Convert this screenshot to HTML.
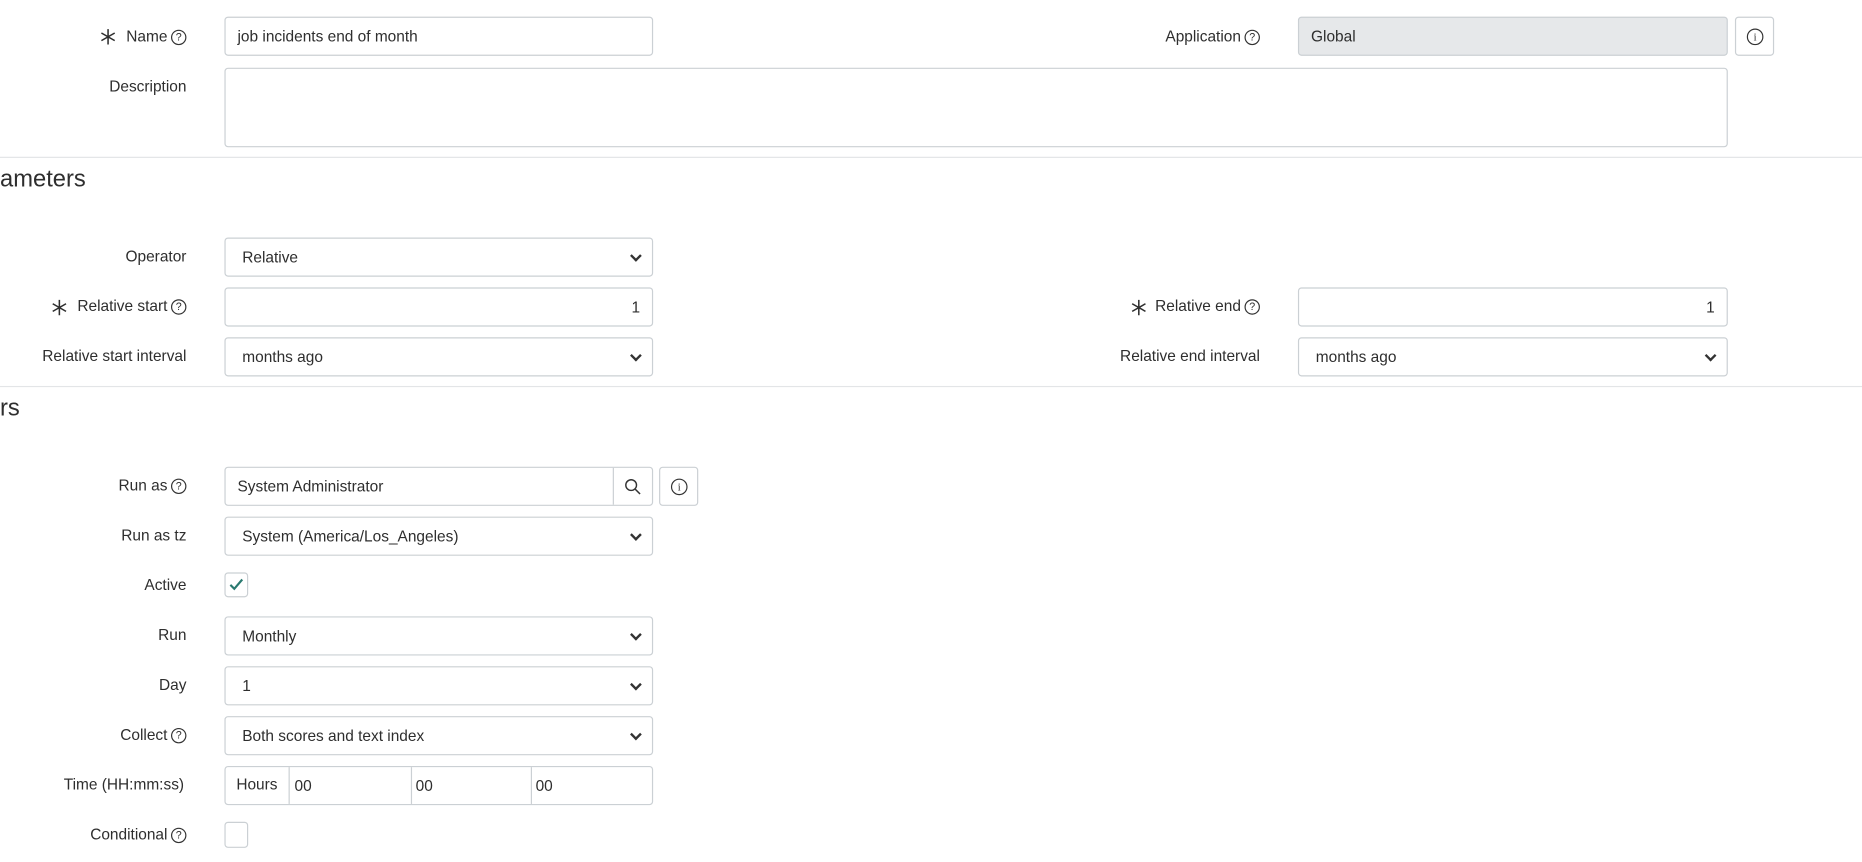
<!DOCTYPE html>
<html><head><meta charset="utf-8"><style>
html,body{margin:0;padding:0;background:#fff;overflow:hidden}
#w{position:absolute;left:0;top:0;width:1568px;height:726px;transform:scale(1.1875);transform-origin:0 0;font-family:"Liberation Sans",sans-serif;color:#2e2e2e;font-size:13px}
.a{position:absolute;box-sizing:border-box}
.in{border:1px solid #cbd0d4;border-radius:3px;background:#fff;height:33px;line-height:31px;padding-left:10px}
.sel{padding-left:14px}
.sel:after{content:"";position:absolute;right:10px;top:11px;width:5px;height:5px;border-right:2px solid #333;border-bottom:2px solid #333;transform:rotate(45deg)}
.lbl{text-align:right;width:200px;height:20px;line-height:20px}
.q{display:inline-block;width:11px;height:11px;border:1px solid #333;border-radius:50%;font-size:9px;line-height:11px;text-align:center;margin-left:3px;vertical-align:1px}
.hr{position:absolute;left:0;width:1568px;height:1px;background:#e3e5e7}
.h{position:absolute;left:0;font-size:20px;color:#2e2e2e}
.ib{border:1px solid #cbd0d4;border-radius:3px;width:33px;height:33px}
.ii{position:absolute;left:9px;top:9px;width:12px;height:12px;border:1px solid #333;border-radius:50%;font-size:9px;line-height:12px;text-align:center;font-family:"Liberation Serif",serif}
</style></head><body><div id="w">
<svg width="0" height="0" style="position:absolute"><defs><g id="ast"><path d="M7 0.5V13.5M1.4 3.8L12.6 10.2M1.4 10.2L12.6 3.8" stroke="#2e2e2e" stroke-width="1.3" fill="none"/></g></defs></svg>

<div class="a lbl" style="left:-43px;top:21px">Name<span class="q">?</span></div>
<svg class="a" style="left:84px;top:24px" width="14" height="14"><use href="#ast"/></svg>
<div class="a in" style="left:189px;top:14px;width:361px">job incidents end of month</div>
<div class="a lbl" style="left:861px;top:21px">Application<span class="q">?</span></div>
<div class="a in" style="left:1093px;top:14px;width:362px;background:#e6e8ea">Global</div>
<div class="a ib" style="left:1461px;top:14px"><div class="ii">i</div></div>

<div class="a lbl" style="left:-43px;top:63px">Description</div>
<div class="a in" style="left:189px;top:57px;width:1266px;height:67px"></div>

<div class="hr" style="top:132px"></div>
<div class="h" style="top:140px">ameters</div>

<div class="a lbl" style="left:-43px;top:206px">Operator</div>
<div class="a in sel" style="left:189px;top:200px;width:361px">Relative</div>

<div class="a lbl" style="left:-43px;top:248px">Relative start<span class="q">?</span></div>
<svg class="a" style="left:43px;top:252px" width="14" height="14"><use href="#ast"/></svg>
<div class="a in" style="left:189px;top:242px;width:361px;text-align:right;padding-right:10px">1</div>
<div class="a lbl" style="left:861px;top:248px">Relative end<span class="q">?</span></div>
<svg class="a" style="left:952px;top:252px" width="14" height="14"><use href="#ast"/></svg>
<div class="a in" style="left:1093px;top:242px;width:362px;text-align:right;padding-right:10px">1</div>

<div class="a lbl" style="left:-43px;top:290px">Relative start interval</div>
<div class="a in sel" style="left:189px;top:284px;width:361px">months ago</div>
<div class="a lbl" style="left:861px;top:290px">Relative end interval</div>
<div class="a in sel" style="left:1093px;top:284px;width:362px">months ago</div>

<div class="hr" style="top:325px"></div>
<div class="h" style="top:333px">rs</div>

<div class="a lbl" style="left:-43px;top:399px">Run as<span class="q">?</span></div>
<div class="a in" style="left:189px;top:393px;width:361px">System Administrator</div>
<div class="a" style="left:516px;top:394px;width:1px;height:31px;background:#cbd0d4"></div>
<svg class="a" style="left:525px;top:402px" width="16" height="16" viewBox="0 0 16 16"><circle cx="6.5" cy="6.5" r="4.5" fill="none" stroke="#333" stroke-width="1.2"/><path d="M10 10l4 4" stroke="#333" stroke-width="1.3"/></svg>
<div class="a ib" style="left:555px;top:393px"><div class="ii">i</div></div>

<div class="a lbl" style="left:-43px;top:441px">Run as tz</div>
<div class="a in sel" style="left:189px;top:435px;width:361px">System (America/Los_Angeles)</div>

<div class="a lbl" style="left:-43px;top:483px">Active</div>
<div class="a" style="left:189px;top:482px;width:20px;height:21px;border:1px solid #cbd0d4;border-radius:3px"></div>
<svg class="a" style="left:191px;top:484px" width="16" height="16" viewBox="0 0 16 16"><path d="M3 8.5l3.3 3.3L13 4" fill="none" stroke="#2a7a70" stroke-width="1.8"/></svg>

<div class="a lbl" style="left:-43px;top:525px">Run</div>
<div class="a in sel" style="left:189px;top:519px;width:361px">Monthly</div>

<div class="a lbl" style="left:-43px;top:567px">Day</div>
<div class="a in sel" style="left:189px;top:561px;width:361px">1</div>

<div class="a lbl" style="left:-43px;top:609px">Collect<span class="q">?</span></div>
<div class="a in sel" style="left:189px;top:603px;width:361px">Both scores and text index</div>

<div class="a lbl" style="left:-45px;top:651px">Time (HH:mm:ss)</div>
<div class="a in" style="left:189px;top:645px;width:361px;padding:0"></div>
<div class="a" style="left:199px;top:645px;line-height:31px">Hours</div>
<div class="a" style="left:243px;top:646px;width:1px;height:31px;background:#cbd0d4"></div>
<div class="a" style="left:248px;top:646px;line-height:31px">00</div>
<div class="a" style="left:346px;top:646px;width:1px;height:31px;background:#cbd0d4"></div>
<div class="a" style="left:350px;top:646px;line-height:31px">00</div>
<div class="a" style="left:447px;top:646px;width:1px;height:31px;background:#cbd0d4"></div>
<div class="a" style="left:451px;top:646px;line-height:31px">00</div>

<div class="a lbl" style="left:-43px;top:693px">Conditional<span class="q">?</span></div>
<div class="a" style="left:189px;top:692px;width:20px;height:22px;border:1px solid #cbd0d4;border-radius:3px"></div>

</div></body></html>
